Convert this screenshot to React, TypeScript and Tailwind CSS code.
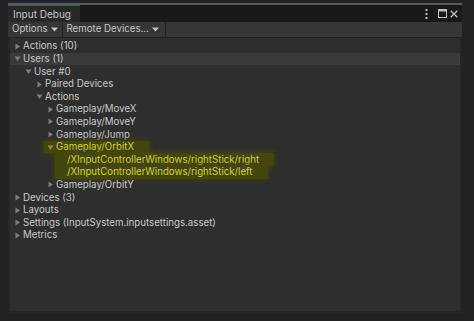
import React from 'react';

type Row = {
  label: string;
  depth: number;
  arrow?: 'right' | 'down';
  selected?: boolean;
  hl?: boolean;
};

const rows: Row[] = [
  { label: 'Actions (10)', depth: 0, arrow: 'right' },
  { label: 'Users (1)', depth: 0, arrow: 'down', selected: true },
  { label: 'User #0', depth: 1, arrow: 'down' },
  { label: 'Paired Devices', depth: 2, arrow: 'right' },
  { label: 'Actions', depth: 2, arrow: 'down' },
  { label: 'Gameplay/MoveX', depth: 3, arrow: 'right' },
  { label: 'Gameplay/MoveY', depth: 3, arrow: 'right' },
  { label: 'Gameplay/Jump', depth: 3, arrow: 'right' },
  { label: 'Gameplay/OrbitX', depth: 3, arrow: 'down', hl: true },
  { label: '/XInputControllerWindows/rightStick/right', depth: 4, hl: true },
  { label: '/XInputControllerWindows/rightStick/left', depth: 4, hl: true },
  { label: 'Gameplay/OrbitY', depth: 3, arrow: 'right' },
  { label: 'Devices (3)', depth: 0, arrow: 'right' },
  { label: 'Layouts', depth: 0, arrow: 'right' },
  { label: 'Settings (InputSystem.inputsettings.asset)', depth: 0, arrow: 'right' },
  { label: 'Metrics', depth: 0, arrow: 'right' },
];

const Arrow: React.FC<{ dir: 'right' | 'down'; color: string }> = ({ dir, color }) => (
  <svg width="7" height="7" viewBox="0 0 7 7" className="shrink-0">
    {dir === 'right' ? (
      <path d="M1.5 0.5 L6 3.5 L1.5 6.5 Z" fill={color} />
    ) : (
      <path d="M0.5 1.5 L6.5 1.5 L3.5 6 Z" fill={color} />
    )}
  </svg>
);

const Caret = () => (
  <svg width="7" height="5" viewBox="0 0 7 5" className="ml-[3px]">
    <path d="M0 0.5 L7 0.5 L3.5 4.5 Z" fill="#c4c4c4" />
  </svg>
);

export default function App() {
  return (
    <div
      className="w-[474px] h-[321px] bg-[#222222] pl-[8px] pr-[12px] pt-[3px] pb-[8px] overflow-hidden"
      style={{ fontFamily: 'Inter, "Noto Sans", sans-serif' }}
    >
      <div className="h-full flex flex-col border-t-2 border-[#5a5a5a]">
        {/* tab strip */}
        <div className="h-[17px] flex items-stretch bg-[#191919]">
          <div className="w-[72px] bg-[#282828] border-t border-[#3b5a78] flex items-center pl-[5px] text-[10px] text-[#c4c4c4]">
            Input Debug
          </div>
          <div className="flex-1" />
          <div className="flex items-center pr-[4px]">
            <svg width="3" height="10" viewBox="0 0 3 10">
              <rect x="0.5" y="0" width="2" height="2" fill="#bdbdbd" />
              <rect x="0.5" y="4" width="2" height="2" fill="#bdbdbd" />
              <rect x="0.5" y="8" width="2" height="2" fill="#bdbdbd" />
            </svg>
            <svg width="9" height="9" viewBox="0 0 9 9" className="ml-[10px]">
              <rect x="0.5" y="0.5" width="8" height="8" fill="none" stroke="#bdbdbd" />
              <rect x="0.5" y="0.5" width="8" height="2" fill="#bdbdbd" />
            </svg>
            <svg width="8" height="8" viewBox="0 0 8 8" className="ml-[3px]">
              <path d="M0.7 0.7 L7.3 7.3 M7.3 0.7 L0.7 7.3" stroke="#bdbdbd" strokeWidth="1.3" />
            </svg>
          </div>
        </div>
        {/* toolbar */}
        <div className="h-[16px] flex items-stretch bg-[#363636] border-b border-[#232323] text-[9.7px] text-[#c4c4c4]">
          <div className="flex items-center pl-[4px] pr-[4px] border-r border-[#232323]">
            Options
            <Caret />
          </div>
          <div className="flex items-center pl-[4px] pr-[6px] border-r border-[#232323]">
            Remote Devices...
            <Caret />
          </div>
        </div>
        {/* tree */}
        <div className="flex-1 bg-[#2e2e2e] border-x-2 border-b-2 border-[#262626] pt-[2px] text-[9.7px] text-[#c8c8c8]">
          {rows.map((r, i) => (
            <div
              key={i}
              className={`h-[12.6px] flex items-center ${r.selected ? 'bg-[#3a3a3a]' : ''}`}
              style={{ paddingLeft: 4 + r.depth * 11 }}
            >
              <div
                className={`flex items-center h-full ${
                  r.hl
                    ? 'bg-[#45450e] shadow-[0_0_5px_1px_#45450e] text-[#d2d23c] ml-[-3px] pl-[3px] pr-[15px]'
                    : ''
                }`}
              >
                <div className="w-[7px] flex items-center">
                  {r.arrow && <Arrow dir={r.arrow} color={r.hl ? '#8f8f30' : '#7d7d7d'} />}
                </div>
                <span className="ml-[2px] leading-none">{r.label}</span>
              </div>
            </div>
          ))}
        </div>
      </div>
    </div>
  );
}
